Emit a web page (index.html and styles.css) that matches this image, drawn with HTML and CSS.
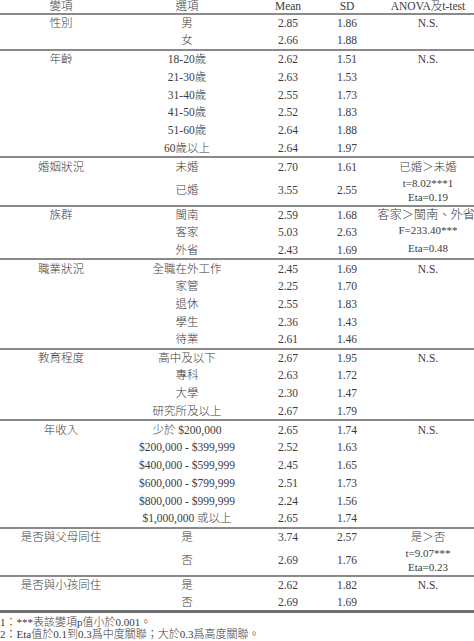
FILE: index.html
```html
<!DOCTYPE html>
<html lang="zh-Hant">
<head>
<meta charset="utf-8">
<link rel="stylesheet" href="styles.css">
</head>
<body>
<div class="page">
<table class="stats">
  <colgroup>
    <col class="c-var"><col class="c-opt"><col class="c-mean"><col class="c-sd"><col class="c-test">
  </colgroup>
  <thead>
    <tr><th>變項</th><th>選項</th><th>Mean</th><th>SD</th><th>ANOVA及t-test</th></tr>
  </thead>
  <tbody>
    <tr><td>性別</td><td>男</td><td>2.85</td><td>1.86</td><td>N.S.</td></tr>
    <tr><td></td><td>女</td><td>2.66</td><td>1.88</td><td></td></tr>
  </tbody>
  <tbody>
    <tr><td>年齡</td><td>18-20歲</td><td>2.62</td><td>1.51</td><td>N.S.</td></tr>
    <tr><td></td><td>21-30歲</td><td>2.63</td><td>1.53</td><td></td></tr>
    <tr><td></td><td>31-40歲</td><td>2.55</td><td>1.73</td><td></td></tr>
    <tr><td></td><td>41-50歲</td><td>2.52</td><td>1.83</td><td></td></tr>
    <tr><td></td><td>51-60歲</td><td>2.64</td><td>1.88</td><td></td></tr>
    <tr><td></td><td>60歲以上</td><td>2.64</td><td>1.97</td><td></td></tr>
  </tbody>
  <tbody>
    <tr><td>婚姻狀況</td><td>未婚</td><td>2.70</td><td>1.61</td><td>已婚＞未婚</td></tr>
    <tr class="tall"><td></td><td>已婚</td><td>3.55</td><td>2.55</td><td class="two">t=8.02***1<br>Eta=0.19</td></tr>
  </tbody>
  <tbody>
    <tr><td>族群</td><td>閩南</td><td>2.59</td><td>1.68</td><td class="wide">客家＞閩南、外省</td></tr>
    <tr><td></td><td>客家</td><td>5.03</td><td>2.63</td><td class="lower">F=233.40***</td></tr>
    <tr><td></td><td>外省</td><td>2.43</td><td>1.69</td><td class="lower">Eta=0.48</td></tr>
  </tbody>
  <tbody>
    <tr><td>職業狀況</td><td>全職在外工作</td><td>2.45</td><td>1.69</td><td>N.S.</td></tr>
    <tr><td></td><td>家管</td><td>2.25</td><td>1.70</td><td></td></tr>
    <tr><td></td><td>退休</td><td>2.55</td><td>1.83</td><td></td></tr>
    <tr><td></td><td>學生</td><td>2.36</td><td>1.43</td><td></td></tr>
    <tr><td></td><td>待業</td><td>2.61</td><td>1.46</td><td></td></tr>
  </tbody>
  <tbody>
    <tr><td>教育程度</td><td>高中及以下</td><td>2.67</td><td>1.95</td><td>N.S.</td></tr>
    <tr><td></td><td>專科</td><td>2.63</td><td>1.72</td><td></td></tr>
    <tr><td></td><td>大學</td><td>2.30</td><td>1.47</td><td></td></tr>
    <tr><td></td><td>研究所及以上</td><td>2.67</td><td>1.79</td><td></td></tr>
  </tbody>
  <tbody>
    <tr><td>年收入</td><td>少於 $200,000</td><td>2.65</td><td>1.74</td><td>N.S.</td></tr>
    <tr><td></td><td>$200,000 - $399,999</td><td>2.52</td><td>1.63</td><td></td></tr>
    <tr><td></td><td>$400,000 - $599,999</td><td>2.45</td><td>1.65</td><td></td></tr>
    <tr><td></td><td>$600,000 - $799,999</td><td>2.51</td><td>1.73</td><td></td></tr>
    <tr><td></td><td>$800,000 - $999,999</td><td>2.24</td><td>1.56</td><td></td></tr>
    <tr><td></td><td>$1,000,000 或以上</td><td>2.65</td><td>1.74</td><td></td></tr>
  </tbody>
  <tbody>
    <tr><td>是否與父母同住</td><td>是</td><td>3.74</td><td>2.57</td><td>是＞否</td></tr>
    <tr class="tall"><td></td><td>否</td><td>2.69</td><td>1.76</td><td class="two">t=9.07***<br>Eta=0.23</td></tr>
  </tbody>
  <tbody class="last">
    <tr><td>是否與小孩同住</td><td>是</td><td>2.62</td><td>1.82</td><td>N.S.</td></tr>
    <tr><td></td><td>否</td><td>2.69</td><td>1.69</td><td></td></tr>
  </tbody>
</table>
<div class="notes">
  <p>1：***表該變項p值小於0.001。</p>
  <p>2：Eta值於0.1到0.3爲中度關聯；大於0.3爲高度關聯。</p>
</div>
</div>
</body>
</html>
```
FILE: styles.css
```css
html, body {
  margin: 0;
  padding: 0;
  background: #ffffff;
  overflow: hidden;
}
.page {
  width: 486px;
  font-family: "Liberation Serif", "Noto Sans CJK TC", serif;
  font-weight: 300;
  color: #3c3c3c;
  font-size: 11.5px;
}
.stats {
  width: 486px;
  border-collapse: collapse;
  table-layout: fixed;
}
.c-var { width: 122px; }
.c-opt { width: 130px; }
.c-mean { width: 72px; }
.c-sd { width: 46px; }
.c-test { width: 116px; }
.stats th,
.stats td {
  padding: 0;
  text-align: center;
  vertical-align: middle;
  font-weight: 300;
  line-height: 14px;
  white-space: nowrap;
}
.stats thead tr { height: 14px; }
.stats thead th { vertical-align: top; line-height: 12px; }
.stats tbody tr { height: 17.9px; }
.stats tbody tr.tall { height: 30.5px; }
.stats tbody tr:first-child td {
  border-top: 2px solid #8a8a8a;
}
.stats tbody.last tr:last-child td {
  border-bottom: 3px solid #6e6e6e;
}
.stats td.two {
  font-size: 11px;
  line-height: 14px;
}
.stats td.wide {
  font-size: 12.4px;
  letter-spacing: -0.2px;
  padding-right: 4px;
}
.stats td.lower {
  font-size: 11px;
  vertical-align: top;
}
.notes {
  padding-top: 3px;
  font-size: 11px;
}
.notes p {
  margin: 0;
  line-height: 12px;
  white-space: nowrap;
}
```
